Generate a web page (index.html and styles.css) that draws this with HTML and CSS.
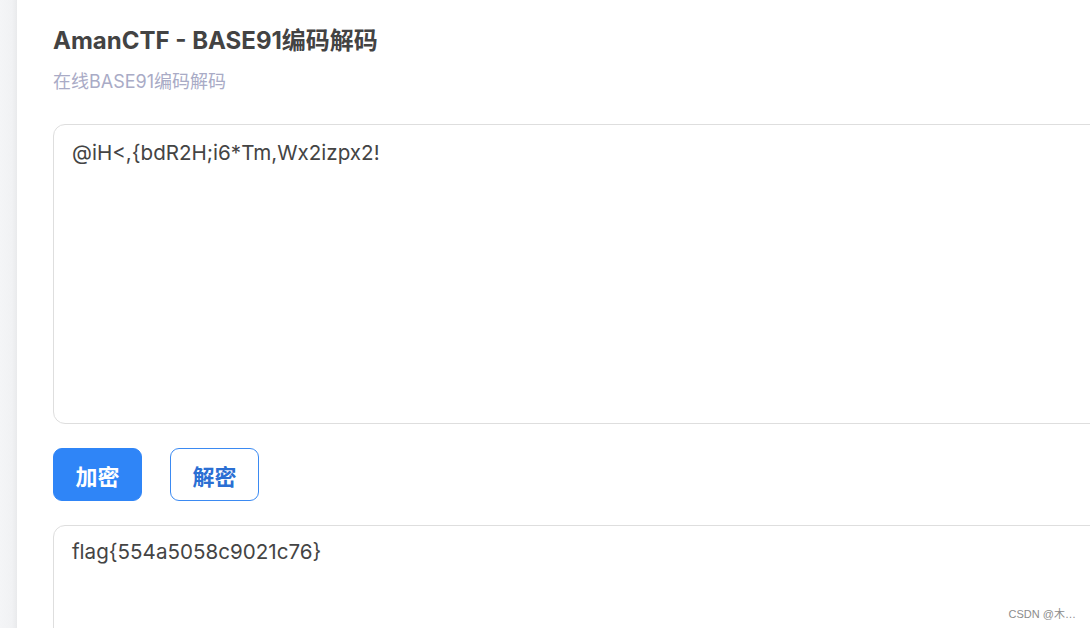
FILE: index.html
```html
<!DOCTYPE html>
<html lang="zh">
<head>
<meta charset="utf-8">
<title>AmanCTF - BASE91编码解码</title>
<link rel="stylesheet" href="styles.css">
</head>
<body>
<div class="page">
  <div class="side"></div>
  <main class="card">
    <h1 class="title">AmanCTF - BASE91编码解码</h1>
    <p class="subtitle">在线BASE91编码解码</p>
    <div class="box box-input">@iH&lt;,{bdR2H;i6*Tm,Wx2izpx2!</div>
    <div class="actions">
      <button class="btn btn-primary">加密</button>
      <button class="btn btn-outline">解密</button>
    </div>
    <div class="box box-output">flag{554a5058c9021c76}</div>
  </main>
</div>
<div class="watermark">CSDN @木…</div>
</body>
</html>
```

FILE: styles.css
```css
html, body {
  margin: 0;
  padding: 0;
  width: 1090px;
  height: 628px;
  overflow: hidden;
  background: #ffffff;
  font-family: Inter, "Noto Sans CJK SC", sans-serif;
}
.page {
  display: flex;
  height: 628px;
  overflow: hidden;
}
.side {
  width: 17px;
  flex: none;
  background: linear-gradient(to right, #f4f5f7 0%, #f1f2f4 70%, #e9eaec 100%);
}
.card {
  flex: none;
  width: 1200px;
  padding: 24px 0 0 36px;
  background: #fff;
}
.title {
  margin: 0;
  font-size: 24px;
  line-height: 34px;
  font-weight: 700;
  color: #434343;
}
.subtitle {
  margin: 12px 0 0;
  font-size: 18px;
  line-height: 24px;
  color: #a9abc6;
}
.box {
  box-sizing: border-box;
  width: 1100px;
  border: 1px solid #dedede;
  border-radius: 12px;
  padding: 14px 18px;
  font-size: 20.6px;
  line-height: 28px;
  color: #444444;
}
.box-input {
  margin-top: 30px;
  height: 300px;
}
.actions {
  display: flex;
  gap: 28px;
  margin-top: 24px;
}
.btn {
  box-sizing: border-box;
  width: 89px;
  height: 53px;
  border-radius: 9px;
  font-family: Inter, "Noto Sans CJK SC", sans-serif;
  font-size: 22px;
  font-weight: 700;
  padding: 0;
}
.btn-primary {
  background: #2f85f7;
  border: 1px solid #2f85f7;
  color: #ffffff;
}
.btn-outline {
  background: #ffffff;
  border: 1px solid #3b8af2;
  color: #2b6fd3;
}
.box-output {
  margin-top: 24px;
  height: 200px;
  padding-top: 12px;
}
.watermark {
  position: absolute;
  right: 14px;
  top: 605px;
  font-family: "Liberation Sans", "Noto Sans CJK SC", sans-serif;
  font-size: 11px;
  color: #8c8c8c;
}
```
